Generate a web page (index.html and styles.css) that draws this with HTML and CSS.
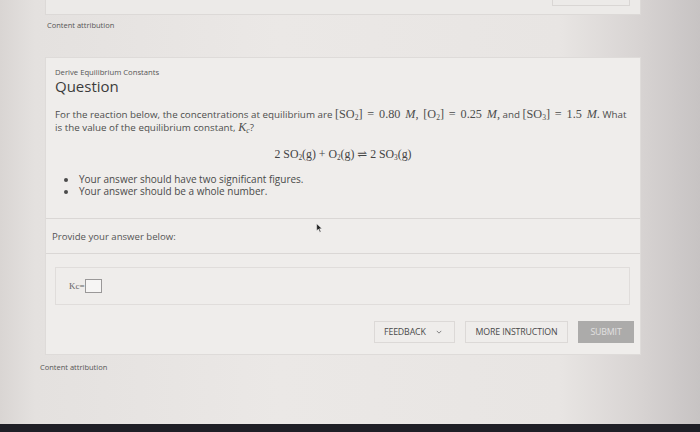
FILE: index.html
```html
<!DOCTYPE html>
<html>
<head>
<meta charset="utf-8">
<link rel="stylesheet" href="styles.css">
</head>
<body>
<div class="screen">
  <div class="page">
    <div class="prev-card"><div class="prev-btn"></div></div>
    <div class="attrib top-attrib">Content attribution</div>

    <div class="card">
      <div class="q-section">
        <div class="topic">Derive Equilibrium Constants</div>
        <h1 class="title">Question</h1>
        <p class="prompt">For the reaction below, the concentrations at equilibrium are <span class="m">[SO<sub>2</sub>] = 0.80 <i>M</i>, [O<sub>2</sub>] = 0.25 <i>M</i>,</span> and <span class="m">[SO<sub>3</sub>] = 1.5 <i>M</i>.</span> What is the value of the equilibrium constant, <span class="m"><i>K<sub>c</sub></i></span>?</p>
        <div class="equation">2 SO<sub>2</sub>(g) + O<sub>2</sub>(g) &#8652; 2 SO<sub>3</sub>(g)</div>
        <ul class="rules">
          <li>Your answer should have two significant figures.</li>
          <li>Your answer should be a whole number.</li>
        </ul>
      </div>
      <div class="provide">Provide your answer below:</div>
      <div class="answer-area">
        <div class="answer-box">
          <span class="kc">Kc=</span><span class="input"></span>
        </div>
      </div>
      <div class="actions">
        <button class="btn feedback">FEEDBACK <svg class="chev" viewBox="0 0 8 5" width="6" height="4"><path d="M1 1 L4 4 L7 1" fill="none" stroke="#777" stroke-width="1.2"/></svg></button>
        <button class="btn more">MORE INSTRUCTION</button>
        <button class="btn submit">SUBMIT</button>
      </div>
    </div>
    <div class="attrib bottom-attrib">Content attribution</div>
  </div>
  <svg class="cursor" viewBox="0 0 10 14" width="7" height="10"><path d="M1 1 L1 11 L3.5 8.5 L5.5 13 L7 12.3 L5 8 L8.5 8 Z" fill="#222" stroke="#fff" stroke-width="0.6"/></svg>
  <div class="bezel"></div>
</div>
</body>
</html>
```

FILE: styles.css
```css
html, body {
  margin: 0;
  padding: 0;
}
body {
  width: 700px;
  height: 432px;
  overflow: hidden;
  font-family: "Open Sans", "Liberation Sans", sans-serif;
  color: #4a4a4a;
}
.screen {
  position: relative;
  width: 700px;
  height: 432px;
  background: linear-gradient(to right, #d9d5d3 0%, #e4e1df 5%, #ebe8e6 40%, #e8e5e3 80%, #d8d4d3 91%, #c7c3c3 100%);
  display: flex;
  flex-direction: column;
}
.page {
  flex: 1;
  padding-left: 45px;
  width: 596px;
}
.prev-card {
  height: 14px;
  border: 1px solid #dcd9d7;
  border-top: none;
  background: #eceae8;
  display: flex;
  justify-content: flex-end;
  padding-right: 10px;
}
.prev-btn {
  width: 76px;
  height: 5px;
  border: 1px solid #d9d6d4;
  border-top: none;
}
.attrib {
  font-size: 7.5px;
  line-height: 10px;
  color: #555;
}
.top-attrib {
  margin-top: 5px;
  padding-left: 2px;
}
.card {
  margin-top: 27px;
  border: 1px solid #dedbd9;
  background: #efedeb;
}
.q-section {
  padding: 9px 9px 21px 9px;
  border-bottom: 1px solid #dad7d5;
}
.topic {
  font-size: 7.7px;
  line-height: 10px;
  color: #555;
}
.title {
  margin: 0;
  font-size: 15px;
  line-height: 19px;
  font-weight: 400;
  color: #3c3c3c;
}
.prompt {
  margin: 12px 0 0;
  padding-right: 2px;
  font-size: 9.8px;
  line-height: 13px;
  color: #4d4d4d;
}
.m {
  font-family: "Liberation Serif", "DejaVu Serif", serif;
  font-size: 12.2px;
  word-spacing: 1.8px;
  line-height: 10px;
}
sub {
  font-size: 62%;
  line-height: 0;
  vertical-align: baseline;
  position: relative;
  top: 0.3em;
}
.equation {
  margin-top: 14px;
  text-align: center;
  font-family: "Liberation Serif", "DejaVu Serif", serif;
  font-size: 11.8px;
  line-height: 13px;
  color: #444;
}
.rules {
  margin: 12px 0 0;
  padding-left: 23px;
  font-size: 10px;
  line-height: 12px;
  color: #4a4a4a;
}
.rules li {
  padding-left: 1px;
}
.provide {
  padding: 11px 6px 0;
  height: 23px;
  font-size: 9.6px;
  line-height: 13px;
  color: #555;
  border-bottom: 1px solid #dad7d5;
}
.answer-area {
  padding: 13px 10px 0 9px;
}
.answer-box {
  height: 36px;
  border: 1px solid #e0dddb;
  display: flex;
  align-items: center;
  padding-left: 13px;
}
.kc {
  font-family: "Liberation Serif", serif;
  font-size: 9px;
  color: #666;
}
.input {
  display: inline-block;
  width: 15px;
  height: 12px;
  border: 1px solid #9a9898;
  background: #f6f5f4;
}
.actions {
  display: flex;
  justify-content: flex-end;
  gap: 10px;
  padding: 16px 6px 11px;
}
.btn {
  height: 22px;
  border: 1px solid #dcd9d7;
  background: transparent;
  font-family: "Open Sans", "Liberation Sans", sans-serif;
  font-size: 8.8px;
  color: #4a4a4a;
  padding: 0 9px;
  display: flex;
  align-items: center;
  gap: 10px;
  letter-spacing: -0.15px;
}
.feedback {
  width: 81px;
}
.more {
  width: 103px;
  justify-content: center;
}
.submit {
  width: 56px;
  justify-content: center;
  background: #acabaa;
  border-color: #acabaa;
  color: #e2e1e1;
}
.bottom-attrib {
  margin-top: 7px;
  margin-left: -5px;
}
.cursor {
  position: absolute;
  left: 316px;
  top: 223px;
}
.bezel {
  height: 8px;
  background: #1f1f26;
}
```
